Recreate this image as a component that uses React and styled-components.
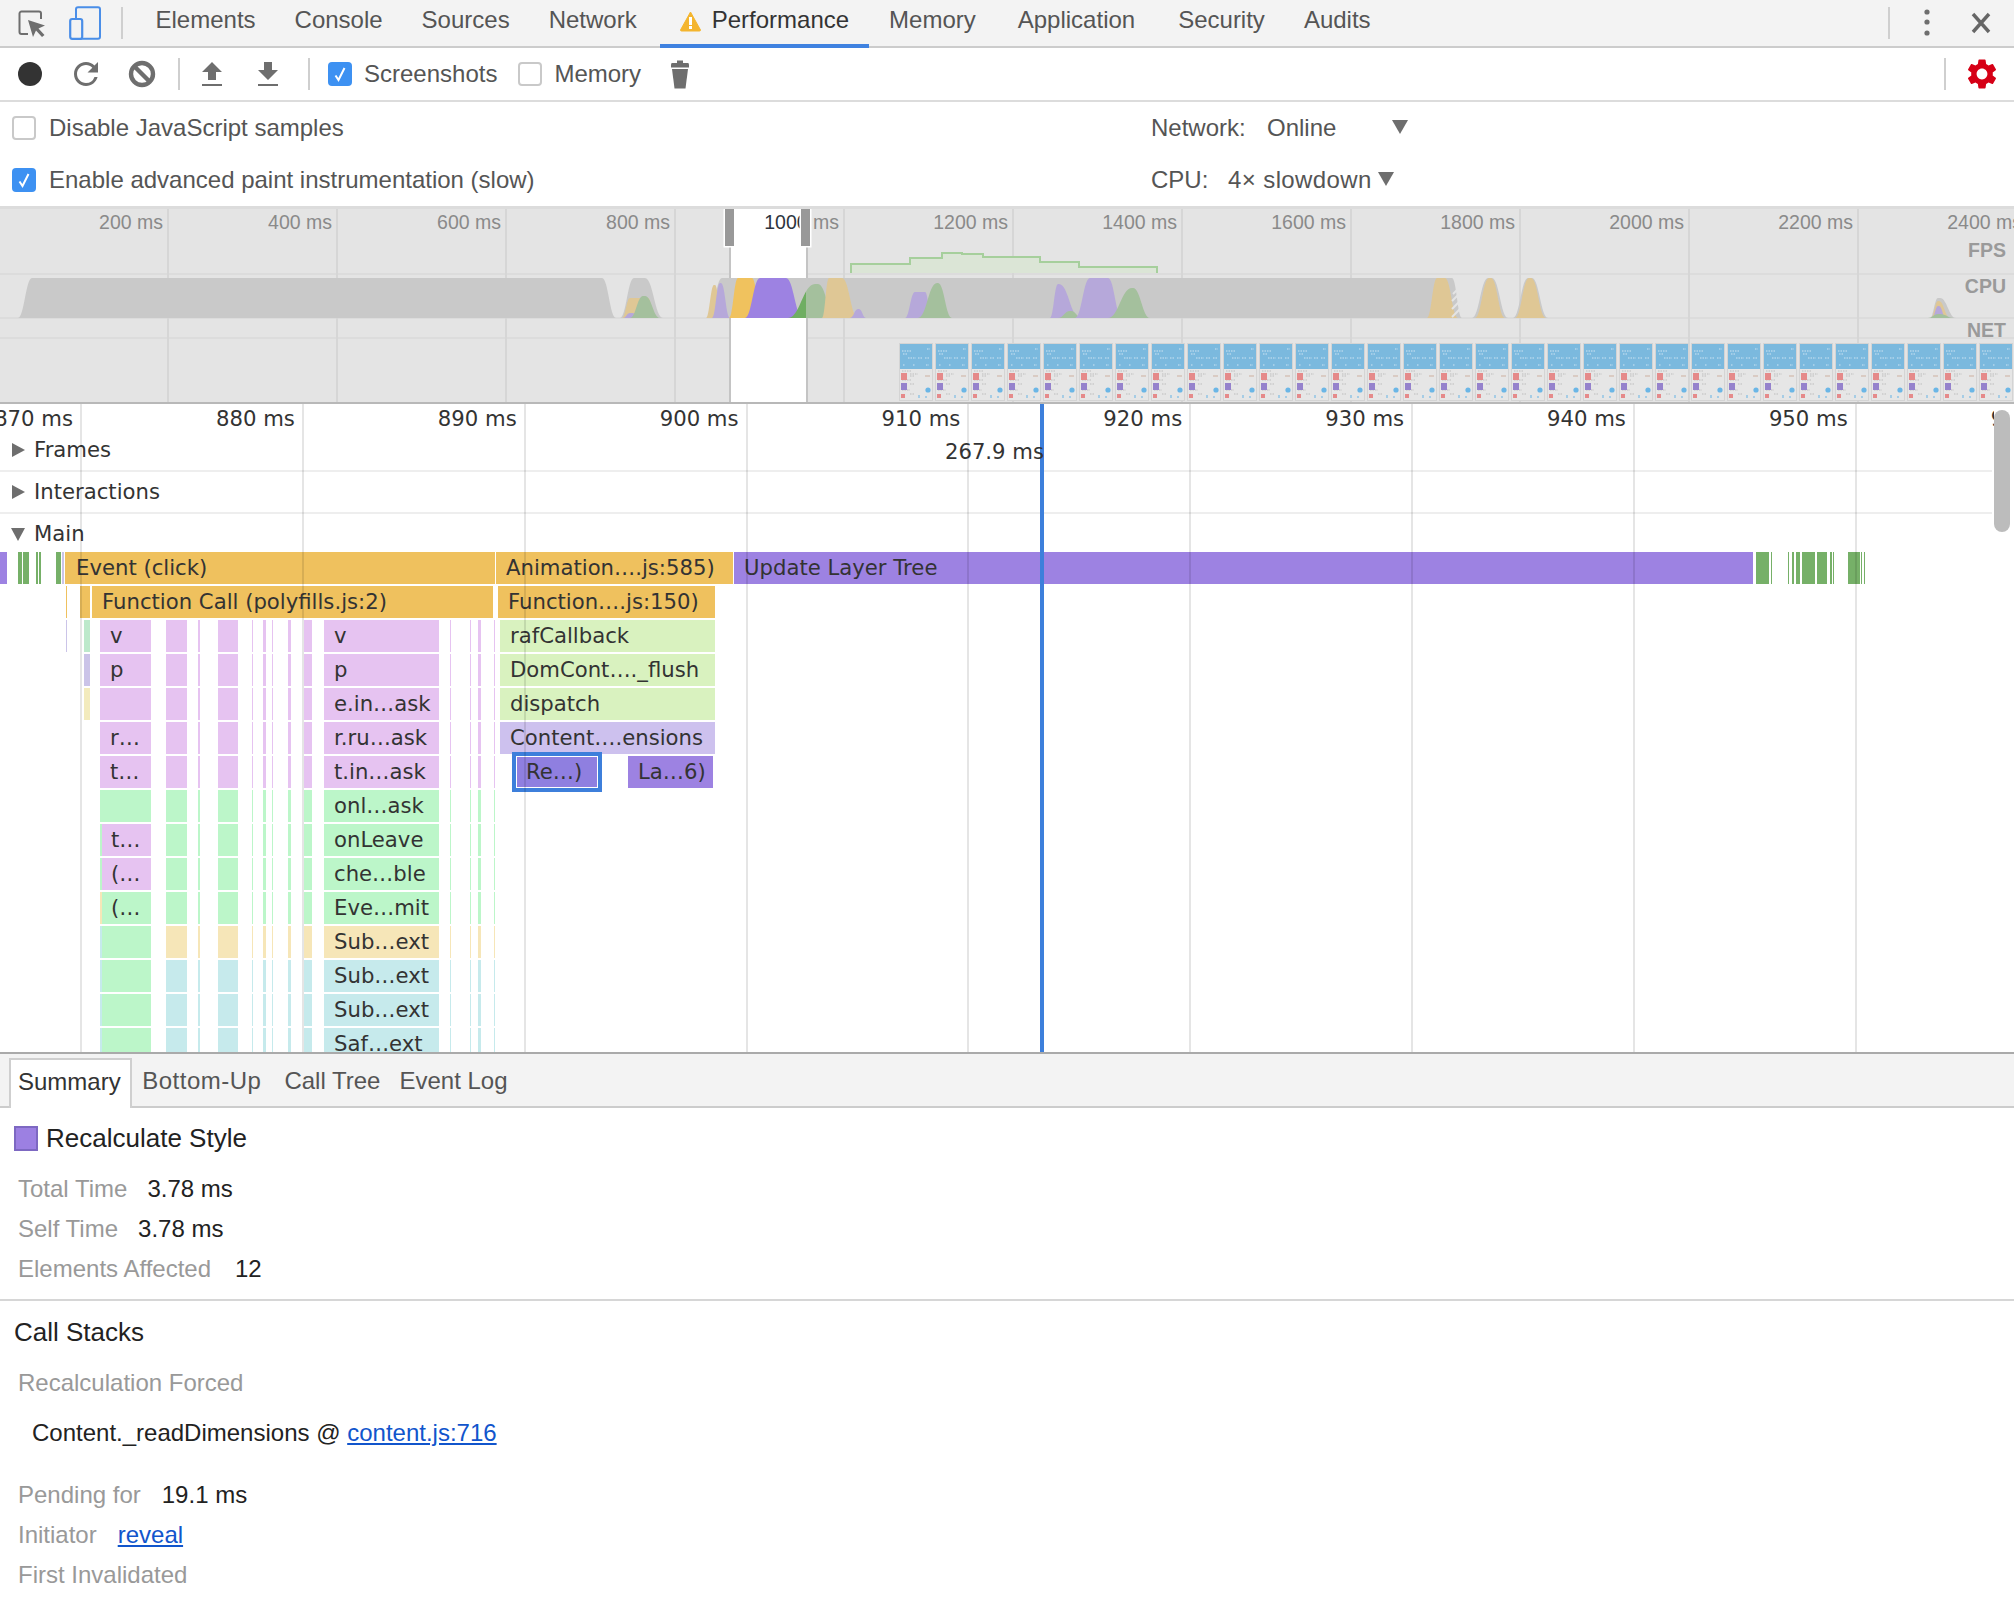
import React from 'react';
import styled, { createGlobalStyle } from 'styled-components';

const Global = createGlobalStyle`
  html, body { margin: 0; padding: 0; background: #fff; }
  * { box-sizing: border-box; }
`;

const Page = styled.div`
  width: 2014px; height: 1602px; overflow: hidden; background: #fff;
  font-family: "Liberation Sans", Arial, sans-serif; font-size: 24px; color: #555;
  display: flex; flex-direction: column;
`;

/* ---------- top tab bar ---------- */
const TabBar = styled.div`
  height: 48px; flex: none; background: #f3f3f3; border-bottom: 2px solid #ccc;
  display: flex; align-items: stretch;
`;
const TabIcon = styled.div`
  width: ${p => p.$w}px; display: flex; align-items: center; justify-content: center;
`;
const VSep = styled.div`
  width: 2px; height: ${p => p.$h || 32}px; background: #cfcfcf; align-self: center; flex: none;
  margin-left: ${p => p.$ml || 0}px; margin-right: ${p => p.$mr || 0}px;
`;
const Tab = styled.div`
  height: 48px; padding: 0 19.5px; display: flex; align-items: center; gap: 11px; line-height: 40px;
  margin-left: ${p => p.$ml || 0}px;
  color: ${p => (p.$active ? '#333' : '#555')};
  border-bottom: ${p => (p.$active ? '4px solid #3f82e0' : '0')};
  padding-bottom: ${p => (p.$active ? '4px' : '8px')};
`;
const Spacer = styled.div`flex: 1;`;

/* ---------- toolbar ---------- */
const Toolbar = styled.div`
  height: 54px; flex: none; border-bottom: 2px solid #dcdcdc; display: flex; align-items: center;
  padding-left: 2px; padding-right: 4px;
`;
const ToolButton = styled.div`
  width: 56px; height: 52px; flex: none; display: flex; align-items: center; justify-content: center;
  margin-left: ${p => p.$ml || 0}px;
`;
const Box = styled.span`
  width: 24px; height: 24px; border-radius: 4px; flex: none; display: inline-flex;
  align-items: center; justify-content: center;
  background: ${p => (p.$on ? '#3d91f2' : '#fff')};
  border: ${p => (p.$on ? '0' : '2px solid #c9c9c9')};
`;
const Check = styled.label`
  display: inline-flex; align-items: center; gap: ${p => p.$gap || 13}px; color: #555;
  margin-left: ${p => p.$ml || 0}px; flex: none;
`;

/* ---------- capture settings ---------- */
const Settings = styled.div`
  height: 107px; flex: none; border-bottom: 3px solid #dcdcdc; padding-left: 12px;
  display: grid; grid-template-columns: 1139px 1fr; grid-template-rows: 52px 52px;
  align-items: center;
`;
const SelectRow = styled.div`
  display: flex; align-items: center;
`;
const SelectLabel = styled.span`width: ${p => p.$w}px; flex: none;`;
const SelectValue = styled.span`
  width: ${p => p.$w}px; flex: none; letter-spacing: ${p => p.$track || 0}px; white-space: nowrap;
`;
const Arrow = styled.i`
  width: 0; height: 0; flex: none; display: block;
  border-left: 8px solid transparent; border-right: 8px solid transparent;
  border-top: 14px solid #6e6e6e; margin-top: -2px;
`;

/* ---------- overview ---------- */
const Overview = styled.div`
  position: relative; height: 195px; flex: none; background: #e4e4e4; border-bottom: 2px solid #b8b8b8;
  overflow: hidden;
`;
const Band = styled.div`
  height: ${p => p.$h}px; border-bottom: 2px solid #dcdcdc;
`;
const FilmStrip = styled.div`
  position: relative; z-index: 3; display: flex; gap: 2px; height: 64px; padding: 4px 0 0 899px;
`;
const Thumb = styled.svg`
  width: 34px; height: 58px; flex: none; display: block;
`;
const OverviewGrid = styled.div`
  position: absolute; inset: 0; display: grid; grid-template-columns: repeat(12, 169px);
`;
const OverviewCell = styled.div`
  border-right: 2px solid #d6d6d6; text-align: right; padding: 0 4px 0 0;
  font-size: 19.5px; line-height: 26px; color: #8a8a8a; white-space: nowrap;
`;
const OverviewLabel = styled.div`
  position: absolute; right: 8px; top: ${p => p.$top}px; z-index: 4;
  font-weight: bold; font-size: 19.5px; line-height: 24px; color: #9a9a9a;
`;
const Chart = styled.svg`
  position: absolute; left: 0; top: 0; z-index: 2; display: block;
`;
const Window = styled.div`
  position: absolute; left: 729px; top: 0; width: 79px; bottom: 0; z-index: 1; background: #fff;
  border-left: 2px solid #c4c4c4; border-right: 2px solid #c4c4c4; overflow: hidden;
`;
const WindowLabel = styled.div`
  position: absolute; right: -33px; top: 0; font-size: 19.5px; line-height: 26px; color: #2d3440; white-space: nowrap;
`;
const Handle = styled.div`
  position: absolute; left: ${p => p.$x}px; top: 0; width: 9px; height: 37px; z-index: 3; background: #999;
  box-shadow: 0 0 0 1.5px #fff;
`;

/* ---------- flame chart ---------- */
const FlameArea = styled.div`
  position: relative; height: 648px; flex: none; overflow: hidden; background: #fff;
`;
const Tracks = styled.div`
  width: 1992px; padding-top: 26px; font-family: "DejaVu Sans", Verdana, sans-serif; font-size: 21.2px; color: #333;
`;
const TrackHead = styled.div`
  height: ${p => p.$h}px; display: flex; align-items: center; gap: 9px; padding-left: 12px;
  padding-top: ${p => p.$top || 0}px;
  border-bottom: ${p => (p.$line ? '2px solid #eeeeee' : '0')};
  line-height: 36px;
`;
const TriRight = styled.i`
  width: 0; height: 0; flex: none; display: block;
  border-top: 7px solid transparent; border-bottom: 7px solid transparent; border-left: 13px solid #6e6e6e;
`;
const TriDown = styled.i`
  width: 0; height: 0; flex: none; display: block;
  border-left: 7px solid transparent; border-right: 7px solid transparent; border-top: 13px solid #6e6e6e;
  margin-left: -1px;
`;
const FlameRow = styled.div`
  position: relative; height: 32px; margin-bottom: 2px;
`;
const Block = styled.div`
  position: absolute; top: 0; bottom: 0; overflow: hidden; white-space: nowrap;
  font-family: "DejaVu Sans", Verdana, sans-serif; font-size: 21.2px; line-height: 31px; color: #333;
  padding-left: ${p => p.$pad ?? 10}px;
`;
const SelectedBlock = styled(Block)`
  top: -4px; bottom: -4px; border: 4px solid #3d7fdb; box-shadow: inset 0 0 0 1px #fff; padding-left: 10px; line-height: 31px; z-index: 1;
`;
const TimeGrid = styled.div`
  position: absolute; top: 0; left: 0; bottom: 0; width: 1994px; overflow: hidden; z-index: 2;
  display: grid; grid-template-columns: 82px repeat(9, 221.85px);
  font-family: "DejaVu Sans", Verdana, sans-serif; font-size: 21.2px; color: #333; line-height: 30px;
`;
const TimeCell = styled.div`
  border-right: 2px solid rgba(0,0,0,.1); display: flex; justify-content: flex-end; padding: 0 7px 0 0; white-space: nowrap;
`;
const TimeText = styled.span`flex: none; height: 30px;`;
const Cursor = styled.div`
  position: absolute; left: 1040px; top: 0; bottom: 0; width: 4px; background: #3d7fdb; z-index: 3;
`;
const CursorLabel = styled.div`
  position: absolute; right: 0; top: 33px; white-space: nowrap;
  font-family: "DejaVu Sans", Verdana, sans-serif; font-size: 21.2px; line-height: 30px; color: #333;
`;
const ScrollThumb = styled.div`
  position: absolute; left: 1994px; top: 6px; width: 16px; height: 122px; border-radius: 8px; background: #bcbcbc; z-index: 4;
`;

/* ---------- details ---------- */
const DetailTabs = styled.div`
  height: 56px; flex: none; background: #f3f3f3; border-top: 2px solid #aaa; border-bottom: 2px solid #ccc;
  display: flex; align-items: flex-end; padding-left: 9px;
`;
const DetailTab = styled.div`
  height: ${p => (p.$active ? '50px' : '48px')};
  padding: 0 10.5px;
  line-height: 46px;
  margin-bottom: ${p => (p.$active ? '-2px' : '0')};
  margin-left: ${p => p.$ml || 0}px;
  letter-spacing: ${p => p.$track || 0}px;
  color: ${p => (p.$active ? '#333' : '#555')};
  background: ${p => (p.$active ? '#fff' : 'transparent')};
  border: ${p => (p.$active ? '2px solid #cfcfcf' : '0')};
  border-bottom: 0;
`;
const ActiveDetailTab = styled(DetailTab)`
  padding: 0 9px 0 7px; line-height: 44px;
`;
const Summary = styled.div`
  padding: 10px 0 10px; border-bottom: 2px solid #d6d6d6; flex: none; color: #222;
`;
const Title = styled.div`
  display: flex; align-items: center; gap: 8px; height: 40px; padding-left: 14px; font-size: 26px; color: #222;
  margin-bottom: ${p => p.$mb || 0}px;
`;
const Swatch = styled.span`
  width: 24px; height: 25px; background: #9c80e2; border: 2px solid #7d68c2; flex: none;
`;
const InfoRow = styled.div`
  height: 40px; line-height: 40px; padding-left: 18px; color: #222; white-space: nowrap;
  display: flex; gap: ${p => p.$gap || 20}px;
  margin-top: ${p => p.$mt || 0}px;
`;
const InfoKey = styled.span`color: #999;`;
const Stack = styled.div`
  height: 40px; line-height: 40px; padding-left: 32px; color: #222; margin-top: 10px;
`;
const Link = styled.a`color: #1155cc; text-decoration: underline;`;
const CallStacks = styled.div`padding-top: 11px; flex: none;`;

/* ---------- drawings ---------- */
const InspectIcon = () => (
  <svg width="30" height="30" viewBox="0 0 30 30">
    <path d="M12 26H5.5A2 2 0 0 1 3.5 24V5.5A2 2 0 0 1 5.5 3.5H23A2 2 0 0 1 25 5.5V11" fill="none" stroke="#6e6e6e" strokeWidth="2" />
    <path d="M12 12L29 17.5L22.5 20.5L28.5 27L26 29L20 22.5L17 29Z" fill="#6e6e6e" />
  </svg>
);
const DeviceIcon = () => (
  <svg width="32" height="34" viewBox="0 0 32 34">
    <rect x="7" y="1.2" width="24" height="31.6" rx="2" fill="none" stroke="#4a8ee8" strokeWidth="2" />
    <rect x="1.2" y="13" width="12" height="19.8" rx="2" fill="#f3f3f3" stroke="#4a8ee8" strokeWidth="2.2" />
  </svg>
);
const WarnIcon = () => (
  <svg width="21" height="21" viewBox="0 0 21 21" style={{ marginTop: 2 }}>
    <path d="M10.5 1L20.5 19a1 1 0 0 1-1 1H1.5a1 1 0 0 1-1-1Z" fill="#f4b52e" stroke="#f4b52e" strokeLinejoin="round" />
    <rect x="9" y="6" width="3" height="8" fill="#fff" />
    <rect x="9" y="15" width="3" height="3" fill="#fff" />
  </svg>
);
const Dots = () => (
  <svg width="6" height="28" viewBox="0 0 6 28">
    <circle cx="3" cy="3" r="2.6" fill="#6e6e6e" /><circle cx="3" cy="13" r="2.6" fill="#6e6e6e" /><circle cx="3" cy="24" r="2.6" fill="#6e6e6e" />
  </svg>
);
const CloseIcon = () => (
  <svg width="22" height="22" viewBox="0 0 22 22">
    <path d="M3 2L19 20M19 2L3 20" stroke="#666" strokeWidth="3.4" />
  </svg>
);
const RecordIcon = () => (
  <svg width="26" height="26" viewBox="0 0 26 26"><circle cx="13" cy="13" r="12" fill="#333" /></svg>
);
const ReloadIcon = () => (
  <svg width="36" height="36" viewBox="0 0 24 24">
    <path fill="#6e6e6e" d="M17.65 6.35A7.958 7.958 0 0 0 12 4c-4.42 0-7.99 3.58-7.99 8s3.57 8 7.99 8c3.73 0 6.84-2.55 7.73-6h-2.08A5.99 5.99 0 0 1 12 18c-3.31 0-6-2.69-6-6s2.69-6 6-6c1.66 0 3.14.69 4.22 1.78L13 11h7V4l-2.35 2.35z" />
  </svg>
);
const ClearIcon = () => (
  <svg width="28" height="28" viewBox="0 0 28 28">
    <circle cx="14" cy="14" r="11" fill="none" stroke="#6e6e6e" strokeWidth="4.4" />
    <path d="M6 6L22 22" stroke="#6e6e6e" strokeWidth="4.4" />
  </svg>
);
const UploadIcon = () => (
  <svg width="22" height="26" viewBox="0 0 22 26">
    <path d="M11 1L21 11H15V19H7V11H1Z" fill="#6e6e6e" />
    <rect x="1" y="23" width="20" height="2" fill="#6e6e6e" />
  </svg>
);
const DownloadIcon = () => (
  <svg width="22" height="26" viewBox="0 0 22 26">
    <path d="M7 1H15V9H21L11 19L1 9H7Z" fill="#6e6e6e" />
    <rect x="1" y="23" width="20" height="2" fill="#6e6e6e" />
  </svg>
);
const TrashIcon = () => (
  <svg width="20" height="29" viewBox="0 0 20 29">
    <path d="M7 0.5H13V3H18Q19 3 19 5V7.5H1V5Q1 3 2 3H7Z" fill="#6e6e6e" />
    <path d="M2 9H18L15.5 28.5H4.5Z" fill="#6e6e6e" />
  </svg>
);
const GearIcon = () => (
  <svg width="36" height="36" viewBox="0 0 24 24">
    <path fill="#d60016" d="M19.14 12.94c.04-.3.06-.61.06-.94 0-.32-.02-.64-.07-.94l2.03-1.58a.49.49 0 0 0 .12-.61l-1.92-3.32a.488.488 0 0 0-.59-.22l-2.39.96c-.5-.38-1.03-.7-1.62-.94l-.36-2.54a.484.484 0 0 0-.48-.41h-3.84c-.24 0-.43.17-.47.41l-.36 2.54c-.59.24-1.13.57-1.62.94l-2.39-.96c-.22-.08-.47 0-.59.22L2.74 8.87c-.12.21-.08.47.12.61l2.03 1.58c-.05.3-.09.63-.09.94s.02.64.07.94l-2.03 1.58a.49.49 0 0 0-.12.61l1.92 3.32c.12.22.37.29.59.22l2.39-.96c.5.38 1.03.7 1.62.94l.36 2.54c.05.24.24.41.48.41h3.84c.24 0 .44-.17.47-.41l.36-2.54c.59-.24 1.13-.56 1.62-.94l2.39.96c.22.08.47 0 .59-.22l1.92-3.32c.12-.22.07-.47-.12-.61l-2.01-1.58zM12 15.6c-1.98 0-3.6-1.62-3.6-3.6s1.62-3.6 3.6-3.6 3.6 1.62 3.6 3.6-1.62 3.6-3.6 3.6z" />
  </svg>
);
const Tick = () => (
  <svg width="14" height="16" viewBox="0 0 14 16"><path d="M2.5 9.5L5.5 14L11.5 2" fill="none" stroke="#fff" strokeWidth="2" /></svg>
);

const CheckBox = ({ on }) => <Box $on={on}>{on && <Tick />}</Box>;

const Screenshot = () => (
  <Thumb viewBox="0 0 34 58">
    <rect width="34" height="58" fill="#d4d4d4" />
    <rect x="1" y="1" width="32" height="25" fill="#7bb9de" />
    <rect x="1" y="26" width="32" height="31" fill="#e6e6e6" />
    <path d="M3 8h9M4 11h5M9 15h8M19 15h5M26 15h5M4 22h2M14 22h2M27 22h3M28 6h3" stroke="#cfe4f2" strokeWidth="1" strokeDasharray="1.5 1" />
    <path d="M3 28h10M11 31h8M11 33h5M3 37h10M11 41h4M3 47h8M11 51h5" stroke="#bdbdbd" strokeWidth="1" strokeDasharray="1.5 1" />
    <path d="M26 33h5" stroke="#cdb0a0" strokeWidth="1" />
    <rect x="2" y="30" width="6" height="7" fill="#e58a8a" />
    <rect x="2" y="40" width="6" height="7" fill="#9582cc" />
    <rect x="2" y="51" width="4" height="4" fill="#e58a8a" />
    <circle cx="29" cy="47" r="2.6" fill="#6bb6e6" />
    <path d="M20 55v-3M27 55v-2" stroke="#7cbce4" strokeWidth="1.2" />
  </Thumb>
);

/* ---------- CPU chart ---------- */
const bump = (x0, x1, xa, xb, top) => {
  const y0 = 318 - 209;
  const t = top - 209;
  const r = (xa - x0) * 0.45;
  const f = (x1 - xb) * 0.45;
  return `M${x0} ${y0}C${x0 + r} ${y0} ${xa - r} ${t} ${xa} ${t}L${xb} ${t}C${xb + f} ${t} ${x1 - f} ${y0} ${x1} ${y0}Z`;
};
const layers = [
  ['gray', bump(18, 616, 32, 602, 278)],
  ['gray', bump(620, 663, 634, 645, 278)],
  ['gray', bump(708, 1462, 722, 1452, 278)],
  ['tan', bump(622, 655, 630, 648, 298)],
  ['purple', bump(623, 642, 630, 632, 313)],
  ['green', bump(630, 660, 643, 645, 296)],
  ['tan', bump(706, 722, 714, 715, 285)],
  ['purple', bump(712, 730, 720, 721, 283)],
  ['gold', bump(729, 762, 738, 752, 278)],
  ['purple', bump(745, 803, 760, 786, 278)],
  ['green', bump(788, 836, 815, 818, 284)],
  ['tan', bump(822, 858, 829, 842, 278)],
  ['purple', bump(850, 866, 858, 859, 309)],
  ['purple', bump(905, 932, 915, 925, 292)],
  ['green', bump(918, 952, 937, 938, 283)],
  ['purple', bump(1050, 1080, 1058, 1059, 284)],
  ['green', bump(1058, 1082, 1070, 1071, 311)],
  ['purple', bump(1075, 1122, 1090, 1108, 278)],
  ['green', bump(1108, 1150, 1132, 1133, 288)],
  ['tan', bump(1427, 1458, 1437, 1445, 278)],
  ['gray', bump(1472, 1508, 1488, 1492, 278)],
  ['tan', bump(1475, 1505, 1489, 1491, 278)],
  ['gray', bump(1513, 1548, 1528, 1532, 278)],
  ['tan', bump(1515, 1546, 1529, 1531, 278)],
  ['gray', bump(1930, 1956, 1938, 1940, 298)],
  ['tan', bump(1931, 1950, 1938, 1939, 301)],
  ['purple', bump(1932, 1946, 1938, 1939, 306)],
  ['green', bump(1928, 1954, 1938, 1940, 314)],
];
const faded = { gray: '#c9c9c9', tan: '#dfc795', purple: '#b6a8da', green: '#a4c09d', gold: '#f0c25e' };
const bright = { gray: '#c9c9c9', tan: '#f0c25e', purple: '#9d82e2', green: '#6fae62', gold: '#f0c25e' };
const Layers = ({ colors }) => layers.map(([c, d], i) => <path key={i} d={d} fill={colors[c]} />);

const OverviewChart = () => (
  <Chart width="2014" height="195" viewBox="0 0 2014 195">
    <defs>
      <clipPath id="win"><rect x="731" y="0" width="75" height="195" /></clipPath>
    </defs>
    <path d="M851 64V55H910V49H942V44H962V45H983V48H1040V53H1079V58H1157V64" fill="#dbe5d6" stroke="#a6cf9c" strokeWidth="2" />
    <Layers colors={faded} />
    <g clipPath="url(#win)"><Layers colors={bright} /></g>
    <path d="M1452 108L1460 100M1452 100L1460 92M1452 92L1459 85M1453 85L1458 80" stroke="#e4e4e4" strokeWidth="2" />
  </Chart>
);

/* ---------- flame data ---------- */
const C = {
  gold: '#efc15e', purple: '#9d82e2', sel: '#8f7fe0', darkgreen: '#76b068', pink: '#e6c3f1', mint: '#bcf6c9',
  yellow: '#f6e6b8', cyan: '#c6eaec', lime: '#d9f2bf', lav: '#cdc1ee', pale: '#f3ebbd', mintlite: '#bde9cb',
  lavlite: '#cbc4e8',
};
const row1 = [
  [0, 7, C.purple], [18, 22, C.darkgreen], [23, 29, C.darkgreen], [36, 38, C.darkgreen], [39, 41, C.darkgreen],
  [56, 61, C.darkgreen], [62, 64, C.lavlite],
  [65, 495, C.gold, 'Event (click)', 11], [496, 733, C.gold, 'Animation….js:585)', 10],
  [734, 1753, C.purple, 'Update Layer Tree', 10],
  [1756, 1769, C.darkgreen], [1771, 1772, C.darkgreen],
  [1788, 1789, C.darkgreen], [1792, 1794, C.darkgreen], [1796, 1800, C.darkgreen], [1802, 1815, C.darkgreen],
  [1817, 1827, C.darkgreen], [1830, 1832, C.darkgreen], [1833, 1834, C.darkgreen],
  [1848, 1860, C.darkgreen], [1861, 1862, C.darkgreen], [1864, 1865, C.darkgreen],
];
const row2 = [
  [66, 67, C.gold], [80, 90, C.gold], [92, 493, C.gold, 'Function Call (polyfills.js:2)', 10],
  [498, 715, C.gold, 'Function….js:150)', 10],
];
const cols = [[166, 187], [198, 199.5], [218, 237.5], [252, 253], [263, 266], [272, 273], [288, 291], [304, 312], [450, 451], [470, 471], [478, 481], [494, 495]];
const deep = [
  { tone: C.pink, main: 'v', first: 'v', firstTone: C.pink, right: ['rafCallback', C.lime], side: C.mintlite, thin: C.lavlite },
  { tone: C.pink, main: 'p', first: 'p', firstTone: C.pink, right: ['DomCont…._flush', C.lime], side: C.lavlite },
  { tone: C.pink, main: 'e.in…ask', firstTone: C.pink, right: ['dispatch', C.lime], side: C.pale },
  { tone: C.pink, main: 'r.ru…ask', first: 'r…', firstTone: C.pink, right: ['Content….ensions', C.lav] },
  { tone: C.pink, main: 't.in…ask', first: 't…', firstTone: C.pink },
  { tone: C.mint, main: 'onl…ask', firstTone: C.mint },
  { tone: C.mint, main: 'onLeave', first: 't…', firstTone: C.pink, inset: 2, edge: C.mint },
  { tone: C.mint, main: 'che…ble', first: '(…', firstTone: C.pink, inset: 2, edge: C.mint },
  { tone: C.mint, main: 'Eve…mit', first: '(…', firstTone: C.mint, inset: 2, edge: C.yellow },
  { tone: C.yellow, main: 'Sub…ext', firstTone: C.mint, inset: 2, edge: C.cyan },
  { tone: C.cyan, main: 'Sub…ext', firstTone: C.mint, inset: 2, edge: C.cyan },
  { tone: C.cyan, main: 'Sub…ext', firstTone: C.mint, inset: 2, edge: C.cyan },
  { tone: C.cyan, main: 'Saf…ext', firstTone: C.mint, inset: 2, edge: C.cyan },
];

const Bar = ({ from, to, color, label, pad }) => (
  <Block $pad={label ? pad : 0} style={{ left: from, width: to - from, background: color }}>{label}</Block>
);

const DeepRow = ({ d, index }) => (
  <FlameRow>
    {d.thin && <Bar from={66} to={67} color={d.thin} />}
    {d.side && <Bar from={84} to={90} color={d.side} />}
    {d.edge && <Bar from={100} to={101.5} color={d.edge} />}
    <Bar from={100 + (d.inset || 0)} to={151} color={d.firstTone} label={d.first} pad={d.inset ? 9 : 10} />
    {cols.map(([a, b]) => <Bar key={a} from={a} to={b} color={d.tone} />)}
    <Bar from={324} to={439} color={d.tone} label={d.main} pad={10} />
    {d.right && <Bar from={500} to={715} color={d.right[1]} label={d.right[0]} pad={10} />}
    {index === 4 && (
      <>
        <SelectedBlock style={{ left: 512, width: 90, background: C.sel }}>Re…)</SelectedBlock>
        <Bar from={628} to={713} color={C.purple} label="La…6)" pad={10} />
      </>
    )}
  </FlameRow>
);

const tabs = [
  ['Elements', 0], ['Console', 0], ['Sources', 0], ['Network', 0], ['Performance', 4],
  ['Memory', 1], ['Application', 3], ['Security', 4], ['Audits', 0],
];
const overviewTimes = [200, 400, 600, 800, 1000, 1200, 1400, 1600, 1800, 2000, 2200, 2400];
const flameTimes = ['870 ms', '880 ms', '890 ms', '900 ms', '910 ms', '920 ms', '930 ms', '940 ms', '950 ms', '960 ms'];

export default function App() {
  return (
    <Page>
      <Global />
      <TabBar>
        <TabIcon $w={62}><InspectIcon /></TabIcon>
        <TabIcon $w={46}><DeviceIcon /></TabIcon>
        <VSep $ml={13} $mr={13} />
        {tabs.map(([t, ml]) => (
          <Tab key={t} $active={t === 'Performance'} $ml={ml}>
            {t === 'Performance' && <WarnIcon />}
            {t}
          </Tab>
        ))}
        <Spacer />
        <VSep />
        <TabIcon $w={74}><Dots /></TabIcon>
        <TabIcon $w={34}><CloseIcon /></TabIcon>
        <TabIcon $w={16} />
      </TabBar>

      <Toolbar>
        <ToolButton><RecordIcon /></ToolButton>
        <ToolButton><ReloadIcon /></ToolButton>
        <ToolButton><ClearIcon /></ToolButton>
        <VSep $ml={8} />
        <ToolButton $ml={4}><UploadIcon /></ToolButton>
        <ToolButton><DownloadIcon /></ToolButton>
        <VSep $ml={12} />
        <Check $ml={18} $gap={12}><CheckBox on />Screenshots</Check>
        <Check $ml={21} $gap={12}><CheckBox />Memory</Check>
        <ToolButton $ml={11}><TrashIcon /></ToolButton>
        <Spacer />
        <VSep $mr={8} />
        <ToolButton><GearIcon /></ToolButton>
      </Toolbar>

      <Settings>
        <Check><CheckBox />Disable JavaScript samples</Check>
        <SelectRow>
          <SelectLabel $w={116}>Network:</SelectLabel>
          <SelectValue $w={125}>Online</SelectValue>
          <Arrow />
        </SelectRow>
        <Check><CheckBox on />Enable advanced paint instrumentation (slow)</Check>
        <SelectRow>
          <SelectLabel $w={77}>CPU:</SelectLabel>
          <SelectValue $w={150} $track={0.4}>4× slowdown</SelectValue>
          <Arrow />
        </SelectRow>
      </Settings>

      <Overview>
        <Band $h={66} />
        <Band $h={44} />
        <Band $h={20} />
        <FilmStrip>
          {Array.from({ length: 31 }, (_, i) => <Screenshot key={i} />)}
        </FilmStrip>
        <OverviewGrid>
          {overviewTimes.map(t => <OverviewCell key={t}>{t} ms</OverviewCell>)}
        </OverviewGrid>
        <Window><WindowLabel>1000 ms</WindowLabel></Window>
        <OverviewChart />
        <Handle $x={725} />
        <Handle $x={801} />
        <OverviewLabel $top={29}>FPS</OverviewLabel>
        <OverviewLabel $top={65}>CPU</OverviewLabel>
        <OverviewLabel $top={109}>NET</OverviewLabel>
      </Overview>

      <FlameArea>
        <Tracks>
          <TrackHead $h={42} $line><TriRight />Frames</TrackHead>
          <TrackHead $h={42} $line><TriRight />Interactions</TrackHead>
          <TrackHead $h={38} $top={2}><TriDown />Main</TrackHead>
          <FlameRow>{row1.map(([a, b, c, l, p]) => <Bar key={a} from={a} to={b} color={c} label={l} pad={p} />)}</FlameRow>
          <FlameRow>{row2.map(([a, b, c, l, p]) => <Bar key={a} from={a} to={b} color={c} label={l} pad={p} />)}</FlameRow>
          {deep.map((d, i) => <DeepRow key={i} d={d} index={i} />)}
        </Tracks>
        <TimeGrid>
          {flameTimes.map(t => <TimeCell key={t}><TimeText>{t}</TimeText></TimeCell>)}
        </TimeGrid>
        <Cursor><CursorLabel>267.9 ms</CursorLabel></Cursor>
        <ScrollThumb />
      </FlameArea>

      <DetailTabs>
        <ActiveDetailTab $active>Summary</ActiveDetailTab>
        <DetailTab $track={0.5}>Bottom-Up</DetailTab>
        <DetailTab $ml={2}>Call Tree</DetailTab>
        <DetailTab $ml={-2}>Event Log</DetailTab>
      </DetailTabs>

      <Summary>
        <Title $mb={11}><Swatch />Recalculate Style</Title>
        <InfoRow><InfoKey>Total Time</InfoKey>3.78 ms</InfoRow>
        <InfoRow><InfoKey>Self Time</InfoKey>3.78 ms</InfoRow>
        <InfoRow $gap={24}><InfoKey>Elements Affected</InfoKey>12</InfoRow>
      </Summary>

      <CallStacks>
        <Title>Call Stacks</Title>
        <InfoRow $mt={11}><InfoKey>Recalculation Forced</InfoKey></InfoRow>
        <Stack>Content._readDimensions @ <Link>content.js:716</Link></Stack>
        <InfoRow $mt={22} $gap={21}><InfoKey>Pending for</InfoKey>19.1 ms</InfoRow>
        <InfoRow $gap={21}><InfoKey>Initiator</InfoKey><Link>reveal</Link></InfoRow>
        <InfoRow><InfoKey>First Invalidated</InfoKey></InfoRow>
      </CallStacks>
    </Page>
  );
}
